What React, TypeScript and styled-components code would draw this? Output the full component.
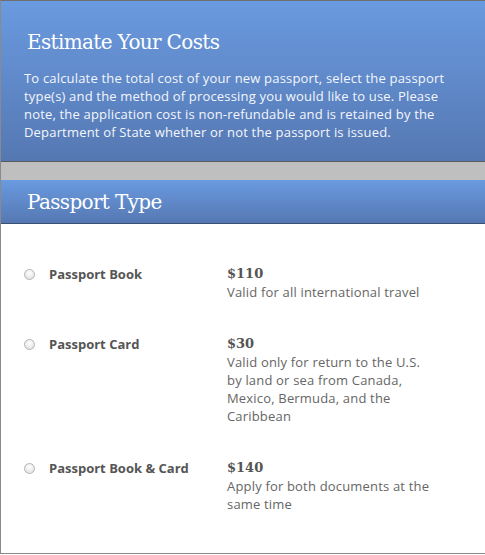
import styled, { createGlobalStyle } from "styled-components";

const GlobalStyle = createGlobalStyle`
  html, body {
    margin: 0;
    padding: 0;
    background: #ffffff;
  }
`;

const Page = styled.div`
  width: 485px;
  height: 554px;
  box-sizing: border-box;
  border-top: 1px solid #6e6e6e;
  border-left: 1px solid #8a8a8a;
  border-bottom: 1px solid #8a8a8a;
  display: flex;
  flex-direction: column;
  overflow: hidden;
`;

const Intro = styled.section`
  background: linear-gradient(#6a9ae0, #5578b2);
  border-bottom: 1px solid #5a5a5a;
  padding: 27px 16px 0 23px;
  height: 161px;
  box-sizing: border-box;
`;

const Title = styled.h1`
  margin: 0 0 0 3px;
  font-family: "DejaVu Serif", Georgia, serif;
  font-weight: normal;
  font-size: 20px;
  line-height: 28px;
  color: #ffffff;
  letter-spacing: -0.65px;
`;

const IntroText = styled.p`
  margin: 13px 0 0;
  font-family: "Open Sans", "DejaVu Sans", sans-serif;
  font-size: 13px;
  line-height: 18px;
  letter-spacing: 0.18px;
  color: #f3f6fb;
`;

const Spacer = styled.div`
  height: 18px;
  background: #bfbfbf;
`;

const SectionHeader = styled.h2`
  margin: 0;
  height: 44px;
  box-sizing: border-box;
  padding: 7px 0 0 26px;
  background: linear-gradient(#6a9ae0, #5578b2);
  border-bottom: 1px solid #3a4f72;
  font-family: "DejaVu Serif", Georgia, serif;
  font-weight: normal;
  font-size: 20px;
  line-height: 30px;
  color: #ffffff;
  letter-spacing: -0.65px;
`;

const Options = styled.div`
  display: flex;
  flex-direction: column;
  gap: 34px;
  padding: 41px 0 0 23px;
`;

const Option = styled.label`
  display: grid;
  grid-template-columns: 25px 178px 206px;
  align-items: start;
  cursor: pointer;
`;

const Radio = styled.span`
  width: 9px;
  height: 9px;
  margin-top: 4px;
  border-radius: 50%;
  border: 1px solid #b4b4b4;
  background: radial-gradient(circle at 50% 35%, #ffffff, #dcdcdc);
`;

const Name = styled.span`
  font-family: "Open Sans", "DejaVu Sans", sans-serif;
  font-weight: 700;
  font-size: 13px;
  line-height: 18px;
  color: #555555;
`;

const Details = styled.div`
  display: flex;
  flex-direction: column;
`;

const Price = styled.span`
  font-family: "DejaVu Serif", Georgia, serif;
  font-weight: 700;
  font-size: 13px;
  line-height: 18px;
  color: #555555;
`;

const Description = styled.span`
  font-family: "Open Sans", "DejaVu Sans", sans-serif;
  font-size: 13px;
  line-height: 18px;
  letter-spacing: 0.18px;
  color: #666666;
`;

const passportTypes = [
  { name: "Passport Book", price: "$110", description: "Valid for all international travel" },
  {
    name: "Passport Card",
    price: "$30",
    description: "Valid only for return to the U.S. by land or sea from Canada, Mexico, Bermuda, and the Caribbean",
  },
  { name: "Passport Book & Card", price: "$140", description: "Apply for both documents at the same time" },
];

const App = () => {
  return (
    <>
      <GlobalStyle />
      <Page>
        <Intro>
          <Title>Estimate Your Costs</Title>
          <IntroText>
            To calculate the total cost of your new passport, select the passport type(s) and the method of
            processing you would like to use. Please note, the application cost is non-refundable and is retained
            by the Department of State whether or not the passport is issued.
          </IntroText>
        </Intro>
        <Spacer />
        <SectionHeader>Passport Type</SectionHeader>
        <Options>
          {passportTypes.map((type) => (
            <Option key={type.name}>
              <Radio />
              <Name>{type.name}</Name>
              <Details>
                <Price>{type.price}</Price>
                <Description>{type.description}</Description>
              </Details>
            </Option>
          ))}
        </Options>
      </Page>
    </>
  );
};

export default App;
